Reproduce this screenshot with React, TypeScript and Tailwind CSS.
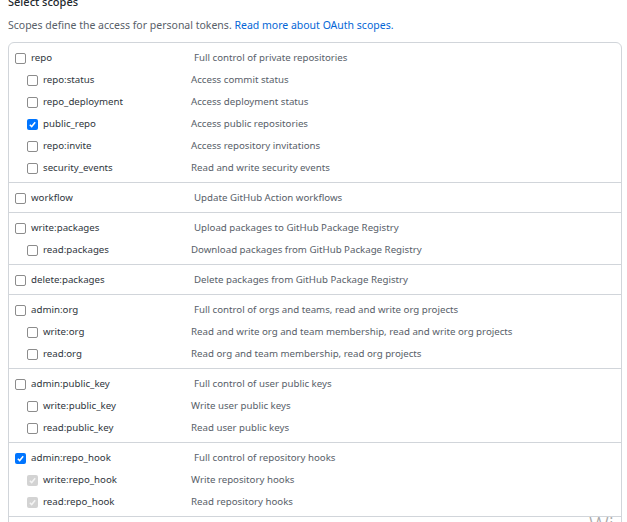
import React from "react";

type Scope = { name: string; desc: string; checked?: boolean; disabled?: boolean };
type Group = { parent: Scope; children?: Scope[] };

const groups: Group[] = [
  {
    parent: { name: "repo", desc: "Full control of private repositories" },
    children: [
      { name: "repo:status", desc: "Access commit status" },
      { name: "repo_deployment", desc: "Access deployment status" },
      { name: "public_repo", desc: "Access public repositories", checked: true },
      { name: "repo:invite", desc: "Access repository invitations" },
      { name: "security_events", desc: "Read and write security events" },
    ],
  },
  { parent: { name: "workflow", desc: "Update GitHub Action workflows" } },
  {
    parent: { name: "write:packages", desc: "Upload packages to GitHub Package Registry" },
    children: [{ name: "read:packages", desc: "Download packages from GitHub Package Registry" }],
  },
  { parent: { name: "delete:packages", desc: "Delete packages from GitHub Package Registry" } },
  {
    parent: { name: "admin:org", desc: "Full control of orgs and teams, read and write org projects" },
    children: [
      { name: "write:org", desc: "Read and write org and team membership, read and write org projects" },
      { name: "read:org", desc: "Read org and team membership, read org projects" },
    ],
  },
  {
    parent: { name: "admin:public_key", desc: "Full control of user public keys" },
    children: [
      { name: "write:public_key", desc: "Write user public keys" },
      { name: "read:public_key", desc: "Read user public keys" },
    ],
  },
  {
    parent: { name: "admin:repo_hook", desc: "Full control of repository hooks", checked: true },
    children: [
      { name: "write:repo_hook", desc: "Write repository hooks", checked: true, disabled: true },
      { name: "read:repo_hook", desc: "Read repository hooks", checked: true, disabled: true },
    ],
  },
  {
    parent: { name: "admin:org_hook", desc: "Full control of organization hooks" },
  },
];

function Box({ checked, disabled }: { checked?: boolean; disabled?: boolean }) {
  if (checked && disabled) {
    return (
      <span className="w-[11px] h-[11px] shrink-0 rounded-[2px] bg-[#d3d3d3] flex items-center justify-center">
        <svg width="9" height="9" viewBox="0 0 10 10">
          <path d="M2 5.2 L4.1 7.3 L8 2.6" stroke="#f4f4f4" strokeWidth="1.7" fill="none" />
        </svg>
      </span>
    );
  }
  if (checked) {
    return (
      <span className="w-[11px] h-[11px] shrink-0 rounded-[2px] bg-[#0075ff] flex items-center justify-center">
        <svg width="9" height="9" viewBox="0 0 10 10">
          <path d="M2 5.2 L4.1 7.3 L8 2.6" stroke="#ffffff" strokeWidth="1.7" fill="none" />
        </svg>
      </span>
    );
  }
  return <span className="w-[11px] h-[11px] shrink-0 rounded-[2px] border border-[#8c8c8c] bg-white" />;
}

function Row({ s, child }: { s: Scope; child?: boolean }) {
  return (
    <div className={`h-[22px] flex items-center ${child ? "pl-[18px]" : "pl-[6px]"}`}>
      <Box checked={s.checked} disabled={s.disabled} />
      <span
        className={`ml-[5px] shrink-0 text-[#2f363d] ${child ? "w-[148px]" : "w-[163px]"}`}
      >
        {s.name}
      </span>
      <span className="text-[#586069] whitespace-nowrap">{s.desc}</span>
    </div>
  );
}

export default function App() {
  return (
    <div
      className="relative w-[627px] h-[522px] overflow-hidden bg-white"
      style={{ fontFamily: '"Segoe UI", "Noto Sans", "Open Sans", sans-serif' }}
    >
      <div className="pl-2 mt-[-6px] text-[11px] leading-[16px] font-medium text-[#24292e]">
        Select scopes
      </div>
      <div className="pl-2 mt-[7px] text-[10.5px] leading-[16px] text-[#586069]">
        Scopes define the access for personal tokens.{" "}
        <a className="text-[#0366d6]">Read more about OAuth scopes.</a>
      </div>
      <div className="ml-2 mt-[9px] w-[614px] border border-[#d1d5da] rounded-[6px] text-[9.7px]">
        {groups.map((g, i) => (
          <div
            key={g.parent.name}
            className={`pt-[4px] pb-[3px] ${i > 0 ? "border-t border-[#d1d5da]" : ""}`}
          >
            <Row s={g.parent} />
            {g.children?.map((c) => (
              <Row key={c.name} s={c} child />
            ))}
          </div>
        ))}
      </div>
      <div className="absolute left-[589px] top-[512px] text-[22px] leading-[24px] text-[#a8a8a8] font-light">
        Wi
      </div>
    </div>
  );
}
